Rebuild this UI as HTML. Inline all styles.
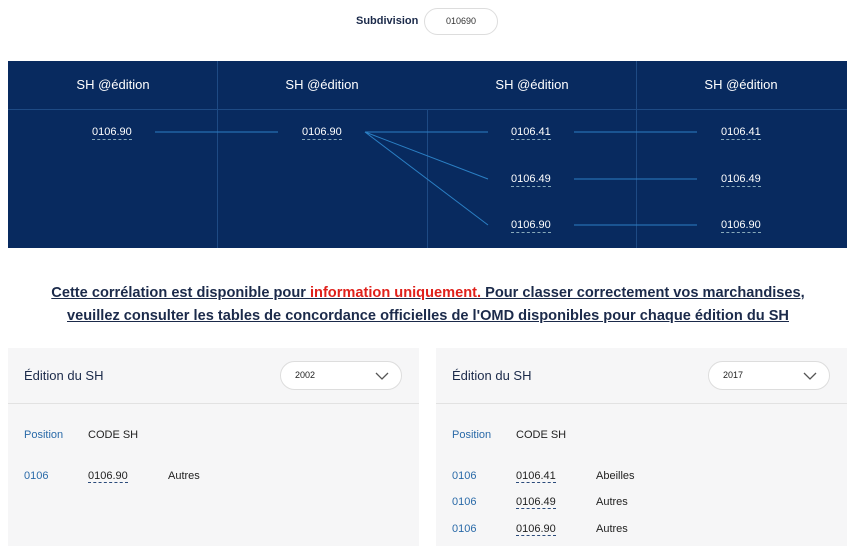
<!DOCTYPE html>
<html><head><meta charset="utf-8"><style>
*{margin:0;padding:0;box-sizing:border-box}
body{width:856px;height:546px;background:#fff;font-family:"Liberation Sans",sans-serif;position:relative;overflow:hidden;color:#222}
.abs{position:absolute}
.sub{left:356px;top:15px;font-size:11px;color:#1b2a4a;font-weight:bold}
.pill{left:424px;top:8px;width:74px;height:27px;border:1px solid #ddd;border-radius:14px;font-size:9px;text-align:center;line-height:25px;color:#333}
.nav{left:8px;top:61px;width:839px;height:187px;background:#082a5f}
.h{position:absolute;top:0;height:48px;width:210px;color:#fff;font-size:13px;text-align:center;line-height:48px}
.c{position:absolute;color:#fff;font-size:11px;border-bottom:1px dashed #8ab;line-height:13px}
.msg{left:0;width:856px;top:282px;text-align:center;font-size:14.6px;font-weight:bold;color:#1b2a4a;line-height:23px;text-decoration:underline}
.card{top:348px;width:411px;height:198px;background:#f6f6f7}
.ct{position:absolute;left:16px;top:20px;font-size:13px;color:#1b2a4a}
.sel{position:absolute;top:13px;width:122px;height:29px;background:#fff;border:1px solid #ddd;border-radius:15px;font-size:9px;padding-left:14px;line-height:27px}
.sel svg{position:absolute;right:12px;top:10px}
.hr{position:absolute;left:0;right:0;top:55px;border-top:1px solid #e2e2e2}
.t{position:absolute;font-size:11px}
.b{color:#2a6aa8}
.u{border-bottom:1px dashed #2a4a7a}
</style></head><body>
<div class="abs sub">Subdivision</div>
<div class="abs pill">010690</div>
<div class="abs nav">
<svg width="839" height="187" style="position:absolute;left:0;top:0">
<g stroke="#1e4a84" stroke-width="1">
<line x1="0" y1="48.5" x2="839" y2="48.5"/>
<line x1="209.5" y1="0" x2="209.5" y2="187"/>
<line x1="628.5" y1="0" x2="628.5" y2="187"/>
<line x1="419.5" y1="48" x2="419.5" y2="187"/>
</g>
<g stroke="#2b7fc4" stroke-width="1">
<line x1="147" y1="71" x2="270" y2="71"/>
<line x1="357" y1="71" x2="480" y2="71"/>
<line x1="357" y1="71" x2="480" y2="118"/>
<line x1="357" y1="71" x2="480" y2="164"/>
<line x1="566" y1="71" x2="689" y2="71"/>
<line x1="566" y1="118" x2="689" y2="118"/>
<line x1="566" y1="164" x2="689" y2="164"/>
</g></svg>
<div class="h" style="left:0">SH @édition</div>
<div class="h" style="left:209px">SH @édition</div>
<div class="h" style="left:419px">SH @édition</div>
<div class="h" style="left:628px">SH @édition</div>
<div class="c" style="left:84px;top:65px">0106.90</div>
<div class="c" style="left:294px;top:65px">0106.90</div>
<div class="c" style="left:503px;top:65px">0106.41</div>
<div class="c" style="left:503px;top:112px">0106.49</div>
<div class="c" style="left:503px;top:158px">0106.90</div>
<div class="c" style="left:713px;top:65px">0106.41</div>
<div class="c" style="left:713px;top:112px">0106.49</div>
<div class="c" style="left:713px;top:158px">0106.90</div>
</div>
<div class="abs msg">Cette corrélation est disponible pour <span style="color:#e0201b">information uniquement.</span> Pour classer correctement vos marchandises,<br>veuillez consulter les tables de concordance officielles de l'OMD disponibles pour chaque édition du SH</div>
<div class="abs card" style="left:8px">
<div class="ct">Édition du SH</div>
<div class="sel" style="left:272px">2002<svg width="14" height="8"><path d="M1 1l6 6 6-6" stroke="#555" fill="none" stroke-width="1.3"/></svg></div>
<div class="hr"></div>
<div class="t b" style="left:16px;top:81px">Position</div>
<div class="t" style="left:80px;top:81px">CODE SH</div>
<div class="t b" style="left:16px;top:122px">0106</div>
<div class="t u" style="left:80px;top:122px">0106.90</div>
<div class="t" style="left:160px;top:122px">Autres</div>
</div>
<div class="abs card" style="left:436px">
<div class="ct">Édition du SH</div>
<div class="sel" style="left:272px">2017<svg width="14" height="8"><path d="M1 1l6 6 6-6" stroke="#555" fill="none" stroke-width="1.3"/></svg></div>
<div class="hr"></div>
<div class="t b" style="left:16px;top:81px">Position</div>
<div class="t" style="left:80px;top:81px">CODE SH</div>
<div class="t b" style="left:16px;top:122px">0106</div>
<div class="t u" style="left:80px;top:122px">0106.41</div>
<div class="t" style="left:160px;top:122px">Abeilles</div>
<div class="t b" style="left:16px;top:148px">0106</div>
<div class="t u" style="left:80px;top:148px">0106.49</div>
<div class="t" style="left:160px;top:148px">Autres</div>
<div class="t b" style="left:16px;top:175px">0106</div>
<div class="t u" style="left:80px;top:175px">0106.90</div>
<div class="t" style="left:160px;top:175px">Autres</div>
</div>
</body></html>
